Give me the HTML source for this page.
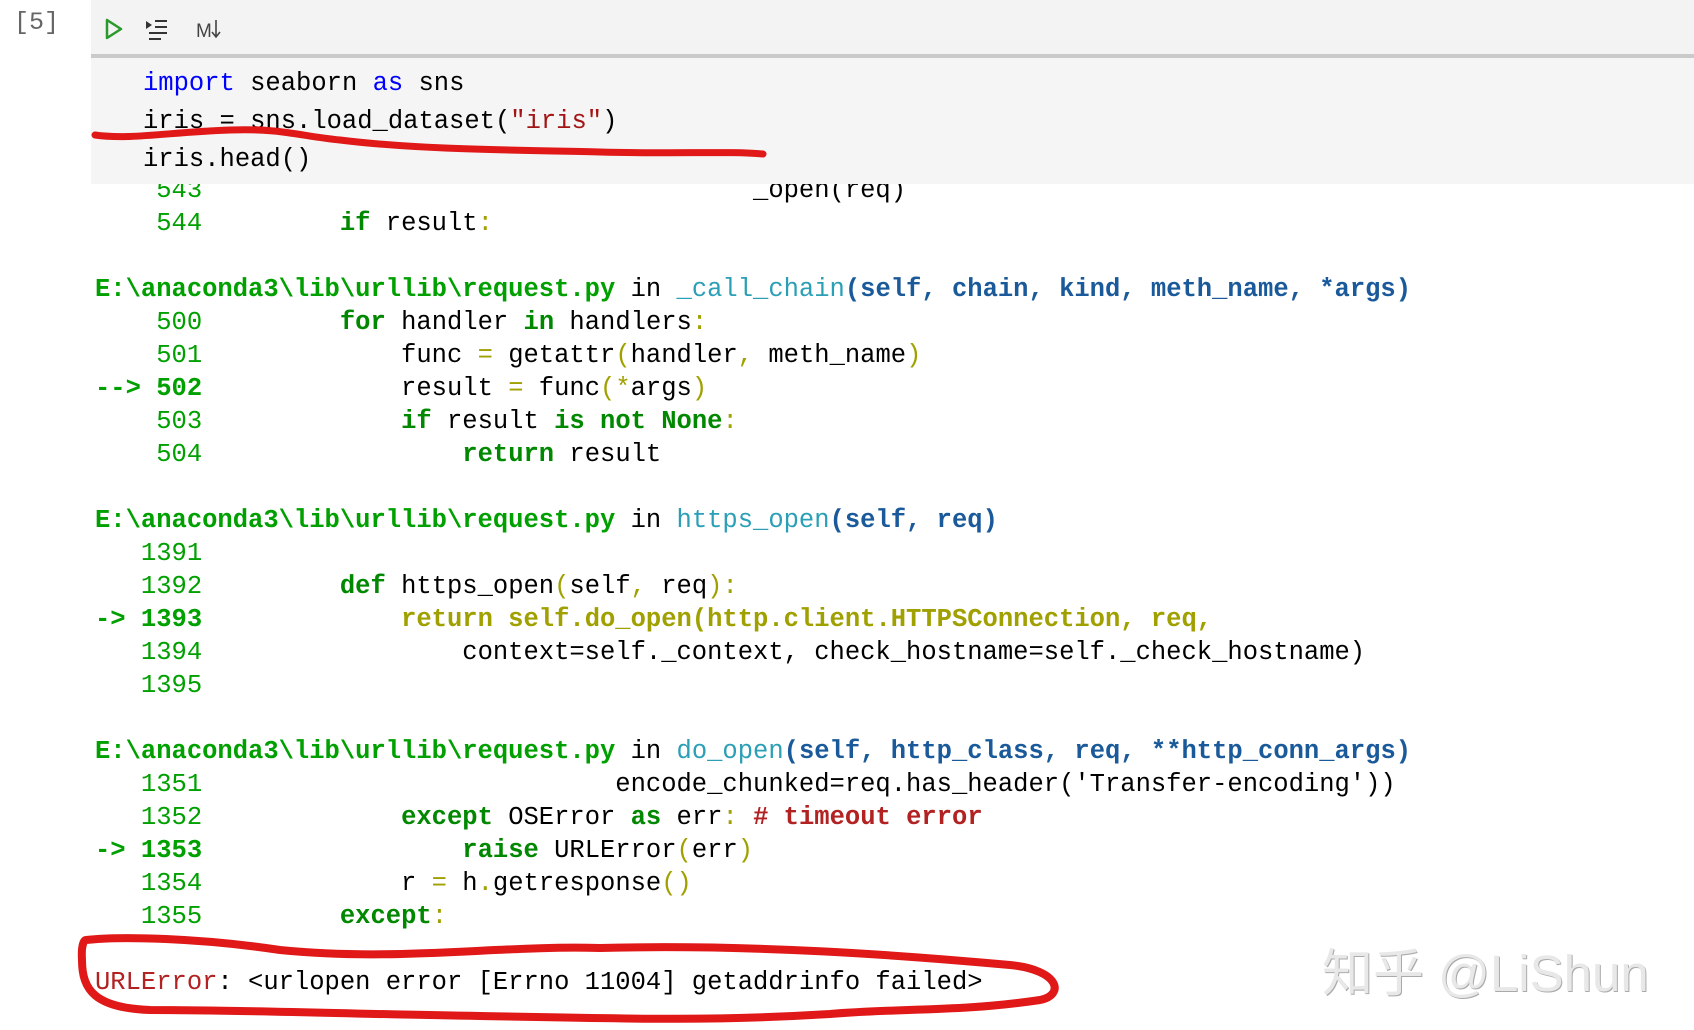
<!DOCTYPE html>
<html><head><meta charset="utf-8"><style>
html,body{margin:0;padding:0;background:#fff;width:1694px;height:1030px;overflow:hidden;position:relative}
.mono{font-family:"Liberation Mono",monospace}
#prompt{position:absolute;left:14px;top:8px;font-size:25px;color:#666}
#toolbar{position:absolute;left:91px;top:0;width:1603px;height:54px;background:#f3f3f3;border-bottom:4px solid #cacaca}
#code{position:absolute;left:91px;top:58px;width:1603px;height:126px;background:#f5f5f5;z-index:2}
#code pre{margin:0;position:absolute;left:52px;top:7px;font-size:25.5px;line-height:38px;color:#000}
#out{position:absolute;left:95px;top:174px;margin:0;font-size:25.5px;line-height:33px;color:#000;z-index:1}
.g{color:#00a000;font-weight:bold}
.n{color:#00a000}
.k{color:#008800;font-weight:bold}
.y{color:#a0a000}
.yb{color:#a0a000;font-weight:bold}
.c{color:#2a9fb6}
.b{color:#1a5a9a;font-weight:bold}
.r{color:#b22222;font-weight:bold}
.red{color:#b22222}
.kw{color:#0000ff}
.s{color:#a31515}
#wm{position:absolute;left:1322px;top:932px;font-family:"Liberation Sans","Noto Sans CJK SC",sans-serif;font-size:51px;color:#e8e8e8;text-shadow:1px 1px 0 #aaa,-1px -1px 0 #fff;z-index:3}
svg.ov{position:absolute;left:0;top:0;z-index:5}
</style></head><body>
<div id="prompt" class="mono">[5]</div>
<div id="toolbar">
<svg width="130" height="54" style="position:absolute;left:0;top:0">
<path d="M16 20 L16 38 L30 29 Z" fill="none" stroke="#2a9a2a" stroke-width="2.5" stroke-linejoin="round"/>
<path d="M55 21 L55 29 L61 25 Z" fill="#333"/>
<line x1="64" y1="21" x2="76" y2="21" stroke="#333" stroke-width="2"/>
<line x1="64" y1="27" x2="76" y2="27" stroke="#333" stroke-width="2"/>
<line x1="58" y1="33" x2="76" y2="33" stroke="#333" stroke-width="2"/>
<line x1="58" y1="39" x2="70" y2="39" stroke="#333" stroke-width="2"/>
<text x="105" y="37" font-family="Liberation Sans,sans-serif" font-size="19" fill="#444">M</text>
<path d="M125 20 L125 36 M121 32 L125 37 L129 32" fill="none" stroke="#444" stroke-width="1.6"/>
</svg>
</div>
<div id="code"><pre class="mono"><span class="kw">import</span> seaborn <span class="kw">as</span> sns
iris = sns.load_dataset(<span class="s">"iris"</span>)
iris.head()</pre></div>
<pre id="out" class="mono"><span class="n">    543</span>                                    _open(req)
<span class="n">    544</span>         <span class="k">if</span> result<span class="y">:</span>

<span class="g">E:\anaconda3\lib\urllib\request.py</span> in <span class="c">_call_chain</span><span class="b">(self, chain, kind, meth_name, *args)</span>
<span class="n">    500</span>         <span class="k">for</span> handler <span class="k">in</span> handlers<span class="y">:</span>
<span class="n">    501</span>             func <span class="y">=</span> getattr<span class="y">(</span>handler<span class="y">,</span> meth_name<span class="y">)</span>
<span class="g">--&gt; 502</span>             result <span class="y">=</span> func<span class="y">(*</span>args<span class="y">)</span>
<span class="n">    503</span>             <span class="k">if</span> result <span class="k">is</span> <span class="k">not</span> <span class="k">None</span><span class="y">:</span>
<span class="n">    504</span>                 <span class="k">return</span> result

<span class="g">E:\anaconda3\lib\urllib\request.py</span> in <span class="c">https_open</span><span class="b">(self, req)</span>
<span class="n">   1391</span>
<span class="n">   1392</span>         <span class="k">def</span> https_open<span class="y">(</span>self<span class="y">,</span> req<span class="y">):</span>
<span class="g">-&gt; 1393</span>             <span class="yb">return self.do_open(http.client.HTTPSConnection, req,</span>
<span class="n">   1394</span>                 context=self._context, check_hostname=self._check_hostname)
<span class="n">   1395</span>

<span class="g">E:\anaconda3\lib\urllib\request.py</span> in <span class="c">do_open</span><span class="b">(self, http_class, req, **http_conn_args)</span>
<span class="n">   1351</span>                           encode_chunked=req.has_header('Transfer-encoding'))
<span class="n">   1352</span>             <span class="k">except</span> OSError <span class="k">as</span> err<span class="y">:</span> <span class="r"># timeout error</span>
<span class="g">-&gt; 1353</span>                 <span class="k">raise</span> URLError<span class="y">(</span>err<span class="y">)</span>
<span class="n">   1354</span>             r <span class="y">=</span> h<span class="y">.</span>getresponse<span class="y">()</span>
<span class="n">   1355</span>         <span class="k">except</span><span class="y">:</span>

<span class="red">URLError</span>: &lt;urlopen error [Errno 11004] getaddrinfo failed&gt;</pre>
<div id="wm">知乎 @LiShun</div>
<svg class="ov" width="1694" height="1030">
<path d="M95 135 C130 140 170 132 230 130 C280 128 300 136 340 140 C420 150 520 150 600 152 C680 154 730 151 763 154" fill="none" stroke="#e01818" stroke-width="7" stroke-linecap="round"/>
<path d="M86 940 C120 936 200 938 280 950 C400 962 500 945 600 948 C750 944 900 955 1010 965 C1060 970 1065 995 1040 1000 C960 1012 900 1008 830 1014 C700 1022 600 1018 480 1016 C350 1014 250 1010 150 1010 C95 1008 82 990 82 960 C81 945 84 940 86 940" fill="none" stroke="#e01818" stroke-width="8" stroke-linecap="round"/>
</svg>
</body></html>
